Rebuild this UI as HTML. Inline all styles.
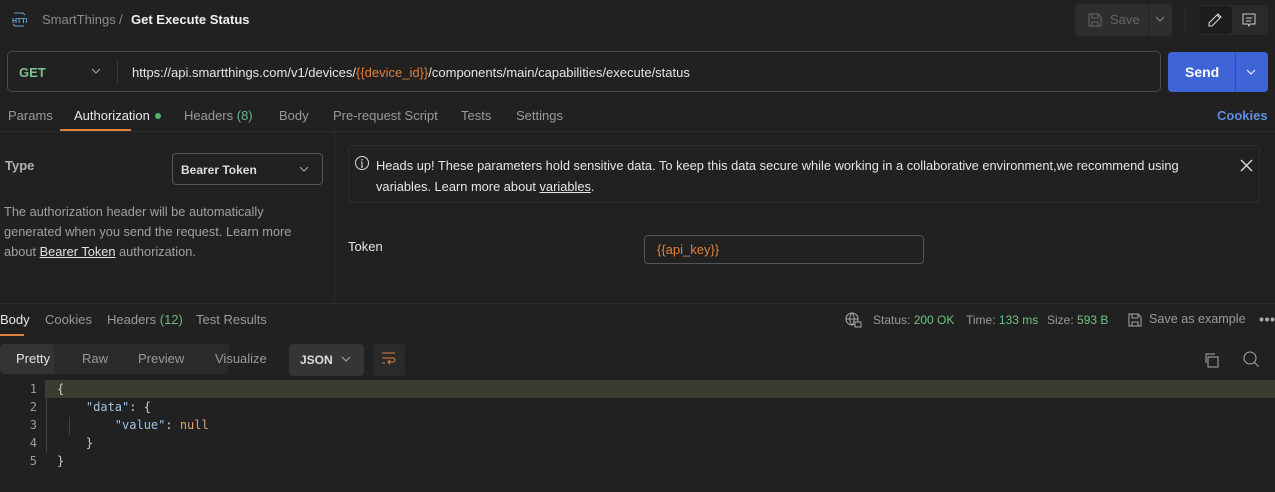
<!DOCTYPE html><html><head><style>
*{margin:0;padding:0;box-sizing:border-box}
body{width:1275px;height:492px;background:#212121;font-family:"Liberation Sans",sans-serif;font-size:13px;color:#cfcfcf;position:relative;overflow:hidden}
.a{position:absolute;white-space:nowrap}
.mono{font-family:"DejaVu Sans Mono","Liberation Mono",monospace;font-size:12px}
</style></head><body>
<svg class="a" style="left:11px;top:11px" width="16" height="17" viewBox="0 0 16 17"><path d="M3 2h9l2 2M13 15H4l-2-2" stroke="#6aa4c8" fill="none"/><text x="1" y="12" font-size="7" fill="#6aa4c8" font-family="Liberation Sans" font-weight="bold">HTTP</text></svg>
<div class="a" style="left:42px;top:12px;color:#8a8a8a">SmartThings</div>
<div class="a" style="left:119px;top:12px;color:#8a8a8a">/</div>
<div class="a" style="left:131px;top:12px;color:#f0f0f0;font-weight:bold">Get Execute Status</div>
<div class="a" style="left:1075px;top:4px;width:97px;height:32px;background:#2e2e2e;border-radius:4px"></div>
<div class="a" style="left:1148px;top:4px;width:1px;height:32px;background:#222"></div>
<svg class="a" style="left:1087px;top:12px" width="16" height="16" viewBox="0 0 16 16"><path d="M2 2h9l3 3v9H2z M5 2v4h6V2 M5 14v-4h6v4" stroke="#666" fill="none"/></svg>
<div class="a" style="left:1110px;top:12px;color:#666">Save</div>
<svg class="a" style="left:1155px;top:15px" width="10" height="8"><path d="M1 2l4 4 4-4" stroke="#888" fill="none"/></svg>
<div class="a" style="left:1185px;top:6px;width:1px;height:28px;background:#2e2e2e"></div>
<div class="a" style="left:1198px;top:5px;width:70px;height:30px;background:#2a2a2a;border-radius:4px"></div>
<div class="a" style="left:1199px;top:6px;width:33px;height:28px;background:#1d1d1d;border-radius:4px"></div>
<svg class="a" style="left:1207px;top:12px" width="16" height="16" viewBox="0 0 16 16"><path d="M11 2l3 3-9 9H2v-3z M10 3l3 3" stroke="#ddd" fill="none"/></svg>
<svg class="a" style="left:1241px;top:12px" width="16" height="16" viewBox="0 0 16 16"><path d="M2 2h12v10H9l-1 2-1-2H2z M5 6h6M5 9h5" stroke="#ccc" fill="none"/></svg>
<div class="a" style="left:7px;top:51px;width:1154px;height:41px;border:1px solid #4a4a4a;border-radius:5px"></div>
<div class="a" style="left:19px;top:65px;color:#7cc48e;font-weight:bold">GET</div>
<svg class="a" style="left:91px;top:68px" width="10" height="7"><path d="M1 1l4 4 4-4" stroke="#aaa" fill="none"/></svg>
<div class="a" style="left:117px;top:60px;width:1px;height:24px;background:#3a3a3a"></div>
<div class="a" style="left:132px;top:65px;color:#e6e6e6">https://api.smartthings.com/v1/devices/<span style="color:#e0803a">{{device_id}}</span>/components/main/capabilities/execute/status</div>
<div class="a" style="left:1168px;top:52px;width:100px;height:40px;background:#3f64d6;border-radius:4px"></div>
<div class="a" style="left:1235px;top:52px;width:1px;height:40px;background:#2f4ea8"></div>
<div class="a" style="left:1185px;top:64px;color:#fff;font-weight:bold;font-size:14px">Send</div>
<svg class="a" style="left:1246px;top:69px" width="10" height="7"><path d="M1 1l4 4 4-4" stroke="#fff" fill="none"/></svg>
<div class="a" style="left:8px;top:108px;color:#9a9a9a">Params</div>
<div class="a" style="left:74px;top:108px;color:#e8e8e8">Authorization</div>
<div class="a" style="left:155px;top:113px;width:6px;height:6px;border-radius:50%;background:#4fb36a"></div>
<div class="a" style="left:60px;top:129px;width:71px;height:2px;background:#e0803a"></div>
<div class="a" style="left:184px;top:108px;color:#9a9a9a">Headers <span style="color:#6fb57f">(8)</span></div>
<div class="a" style="left:279px;top:108px;color:#9a9a9a">Body</div>
<div class="a" style="left:333px;top:108px;color:#9a9a9a">Pre-request Script</div>
<div class="a" style="left:461px;top:108px;color:#9a9a9a">Tests</div>
<div class="a" style="left:516px;top:108px;color:#9a9a9a">Settings</div>
<div class="a" style="left:1217px;top:108px;color:#5e8fe0;font-weight:bold">Cookies</div>
<div class="a" style="left:0;top:131px;width:1275px;height:1px;background:#2c2c2c"></div>
<div class="a" style="left:334px;top:132px;width:1px;height:171px;background:#2c2c2c"></div>
<div class="a" style="left:5px;top:158px;color:#b0b0b0;font-weight:bold">Type</div>
<div class="a" style="left:172px;top:153px;width:151px;height:32px;border:1px solid #555;border-radius:4px"></div>
<div class="a" style="left:181px;top:163px;color:#ddd;font-weight:bold;font-size:12px">Bearer Token</div>
<svg class="a" style="left:299px;top:166px" width="10" height="7"><path d="M1 1l4 4 4-4" stroke="#aaa" fill="none"/></svg>
<div class="a" style="left:4px;top:202px;color:#a0a0a0;line-height:20px;white-space:normal;width:320px;font-size:12.8px">The authorization header will be automatically generated when you send the request. Learn more about <u style="color:#e6e6e6">Bearer Token</u> authorization.</div>
<div class="a" style="left:348px;top:145px;width:912px;height:58px;border:1px solid #2e2e2e;border-radius:4px"></div>
<svg class="a" style="left:354px;top:155px" width="16" height="16" viewBox="0 0 16 16"><circle cx="8" cy="8" r="6.5" stroke="#ddd" fill="none"/><path d="M8 7v5M7 7h1M7 12h2" stroke="#ddd"/><circle cx="8" cy="4.8" r=".8" fill="#ddd"/></svg>
<div class="a" style="left:376px;top:155px;color:#e6e6e6;line-height:21px;font-size:12.85px">Heads up! These parameters hold sensitive data. To keep this data secure while working in a collaborative environment,we recommend using<br>variables. Learn more about <u>variables</u>.</div>
<svg class="a" style="left:1240px;top:159px" width="13" height="13"><path d="M1 1l11 11M12 1L1 12" stroke="#ddd" stroke-width="1.3"/></svg>
<div class="a" style="left:348px;top:239px;color:#e6e6e6">Token</div>
<div class="a" style="left:644px;top:235px;width:280px;height:29px;border:1px solid #555;border-radius:4px"></div>
<div class="a" style="left:657px;top:242px;color:#e0803a">{{api_key}}</div>
<div class="a" style="left:0;top:303px;width:1275px;height:1px;background:#2c2c2c"></div>
<div class="a" style="left:0;top:312px;color:#e8e8e8">Body</div>
<div class="a" style="left:0;top:334px;width:24px;height:2px;background:#e0803a"></div>
<div class="a" style="left:45px;top:312px;color:#9a9a9a">Cookies</div>
<div class="a" style="left:107px;top:312px;color:#9a9a9a">Headers <span style="color:#6fb57f">(12)</span></div>
<div class="a" style="left:196px;top:312px;color:#9a9a9a">Test Results</div>
<svg class="a" style="left:845px;top:312px" width="17" height="16" viewBox="0 0 17 16"><circle cx="7" cy="7" r="6" stroke="#aaa" fill="none"/><path d="M1 7h12M7 1c-3 3-3 9 0 12M7 1c3 3 3 9 0 12" stroke="#aaa" fill="none"/><rect x="10" y="10" width="6" height="5" fill="#212121" stroke="#aaa"/></svg>
<div class="a" style="left:873px;top:313px;color:#9a9a9a;font-size:12px">Status: <span style="color:#6fc283">200 OK</span></div>
<div class="a" style="left:966px;top:313px;color:#9a9a9a;font-size:12px">Time: <span style="color:#6fc283">133 ms</span></div>
<div class="a" style="left:1047px;top:313px;color:#9a9a9a;font-size:12px">Size: <span style="color:#6fc283">593 B</span></div>
<svg class="a" style="left:1127px;top:312px" width="16" height="16" viewBox="0 0 16 16"><path d="M2 2h9l3 3v9H2z M5 2v4h6V2 M5 14v-4h6v4" stroke="#aaa" fill="none"/></svg>
<div class="a" style="left:1149px;top:312px;color:#9a9a9a;font-size:12.6px">Save as example</div>
<svg class="a" style="left:1259px;top:317px" width="16" height="5"><circle cx="2.5" cy="2.5" r="2" fill="#aaa"/><circle cx="8" cy="2.5" r="2" fill="#aaa"/><circle cx="13.5" cy="2.5" r="2" fill="#aaa"/></svg>
<div class="a" style="left:0;top:344px;width:229px;height:30px;background:#2a2a2a;border-radius:4px"></div>
<div class="a" style="left:0;top:344px;width:54px;height:30px;background:#333;border-radius:4px 0 0 4px"></div>
<div class="a" style="left:16px;top:351px;color:#e6e6e6">Pretty</div>
<div class="a" style="left:82px;top:351px;color:#9a9a9a">Raw</div>
<div class="a" style="left:138px;top:351px;color:#9a9a9a">Preview</div>
<div class="a" style="left:215px;top:351px;color:#9a9a9a">Visualize</div>
<div class="a" style="left:289px;top:344px;width:75px;height:32px;background:#353535;border-radius:4px"></div>
<div class="a" style="left:300px;top:353px;color:#ddd;font-size:12px;font-weight:bold">JSON</div>
<svg class="a" style="left:341px;top:356px" width="10" height="7"><path d="M1 1l4 4 4-4" stroke="#aaa" fill="none"/></svg>
<div class="a" style="left:373px;top:344px;width:32px;height:32px;background:#2a2a2a;border-radius:4px"></div>
<svg class="a" style="left:381px;top:352px" width="16" height="14"><path d="M1 1h13M1 6h11a2 2 0 010 4H8M1 11h3M9 8l-2 2 2 2" stroke="#e0803a" fill="none"/></svg>
<svg class="a" style="left:1204px;top:352px" width="16" height="16"><rect x="4" y="5" width="10" height="10" stroke="#aaa" fill="none"/><path d="M2 11V2h9" stroke="#aaa" fill="none"/></svg>
<svg class="a" style="left:1243px;top:351px" width="17" height="17"><circle cx="7" cy="7" r="6" stroke="#aaa" fill="none"/><path d="M11.5 11.5l4 4" stroke="#aaa"/></svg>
<div class="a" style="left:45px;top:380px;width:1230px;height:18px;background:#3b3b30"></div>
<div class="a mono" style="left:0;top:380px;width:37px;text-align:right;line-height:18px;color:#9a9a9a;white-space:pre">1
2
3
4
5</div>
<div class="a" style="left:69px;top:417px;width:1px;height:18px;background:#444"></div>
<div class="a" style="left:46px;top:398px;width:1px;height:54px;background:#444"></div>
<div class="a mono" style="left:57px;top:380px;line-height:18px;color:#ccc;white-space:pre">{
    <span style="color:#9cc3e6">"data"</span>: {
        <span style="color:#9cc3e6">"value"</span>: <span style="color:#d6a570">null</span>
    }
}</div>
</body></html>
